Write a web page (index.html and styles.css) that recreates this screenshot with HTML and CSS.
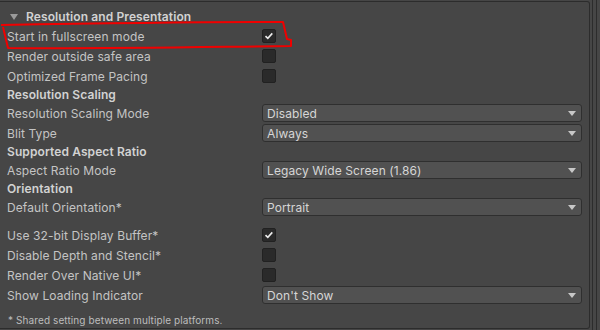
FILE: index.html
```html
<!DOCTYPE html>
<html lang="en">
<head>
    <meta charset="UTF-8">
    <title>Player Settings - Resolution and Presentation</title>
    <link rel="stylesheet" href="styles.css">
</head>
<body>

    <div class="frame">
        <!-- Panel principal -->
        <div class="panel">
            <div class="foldout">
                <span class="fold-arrow"></span>
                <span>Resolution and Presentation</span>
            </div>

            <div class="row">
                <span class="label">Start in fullscreen mode</span>
                <span class="checkbox checked">
                    <svg viewBox="0 0 14 14" width="14" height="14"><path d="M3.5 7.2 L5.8 9.4 L10.3 4.4" /></svg>
                </span>
            </div>
            <div class="row">
                <span class="label">Render outside safe area</span>
                <span class="checkbox"></span>
            </div>
            <div class="row">
                <span class="label">Optimized Frame Pacing</span>
                <span class="checkbox"></span>
            </div>

            <div class="section">Resolution Scaling</div>
            <div class="row">
                <span class="label">Resolution Scaling Mode</span>
                <div class="dropdown"><span>Disabled</span><span class="caret"></span></div>
            </div>
            <div class="row">
                <span class="label">Blit Type</span>
                <div class="dropdown"><span>Always</span><span class="caret"></span></div>
            </div>

            <div class="section">Supported Aspect Ratio</div>
            <div class="row">
                <span class="label">Aspect Ratio Mode</span>
                <div class="dropdown"><span>Legacy Wide Screen (1.86)</span><span class="caret"></span></div>
            </div>

            <div class="section">Orientation</div>
            <div class="row">
                <span class="label">Default Orientation*</span>
                <div class="dropdown"><span>Portrait</span><span class="caret"></span></div>
            </div>

            <div class="spacer"></div>

            <div class="row">
                <span class="label">Use 32-bit Display Buffer*</span>
                <span class="checkbox checked">
                    <svg viewBox="0 0 14 14" width="14" height="14"><path d="M3.5 7.2 L5.8 9.4 L10.3 4.4" /></svg>
                </span>
            </div>
            <div class="row">
                <span class="label">Disable Depth and Stencil*</span>
                <span class="checkbox"></span>
            </div>
            <div class="row">
                <span class="label">Render Over Native UI*</span>
                <span class="checkbox"></span>
            </div>
            <div class="row">
                <span class="label">Show Loading Indicator</span>
                <div class="dropdown"><span>Don't Show</span><span class="caret"></span></div>
            </div>

            <div class="note">* Shared setting between multiple platforms.</div>
        </div>

        <!-- Barra lateral -->
        <div class="gutter"><div class="rail"></div></div>
    </div>

    <!-- Marca roja a mano -->
    <svg class="scribble" width="600" height="330" viewBox="0 0 600 330">
        <path d="M1 25 C60 24 180 22 283 22 L287 39 L291 40 L291 46 C200 47 90 49 8 48 L3 27" />
    </svg>

</body>
</html>
```

FILE: styles.css
```css
body {
    margin: 0;
    background-color: #464646;
    font-family: Inter, "Noto Sans", sans-serif;
    font-size: 12px;
    letter-spacing: 0.1px;
    color: #c4c4c4;
    position: relative;
    width: 600px;
    height: 330px;
    overflow: hidden;
}
.frame {
    display: flex;
    height: 330px;
}
.panel {
    width: 590px;
    height: 328px;
    margin-top: 1px;
    box-sizing: border-box;
    border-top: 1px solid #2c2c2c;
    border-right: 1px solid #2c2c2c;
    border-bottom: 1px solid #2c2c2c;
    border-radius: 0 3px 3px 0;
    padding: 4px 7px 0 7px;
}
.foldout {
    display: flex;
    align-items: center;
    height: 20px;
    font-weight: 600;
    color: #d2d2d2;
}
.fold-arrow {
    width: 0;
    height: 0;
    border-left: 4px solid transparent;
    border-right: 4px solid transparent;
    border-top: 6px solid #9a9a9a;
    margin: 1px 8px 0 3px;
}
.section {
    display: flex;
    align-items: center;
    height: 17px;
    font-weight: 600;
    color: #d2d2d2;
}
.row {
    display: flex;
    align-items: center;
    height: 20px;
}
.label {
    width: 255px;
    white-space: nowrap;
}
.checkbox {
    width: 14px;
    height: 14px;
    box-sizing: border-box;
    background-color: #2a2a2a;
    border: 1px solid #212121;
    border-radius: 2px;
    display: flex;
    align-items: center;
    justify-content: center;
}
.checkbox svg {
    margin: -1px;
}
.checkbox path {
    fill: none;
    stroke: #ececec;
    stroke-width: 1.6;
}
.dropdown {
    width: 320px;
    height: 18px;
    box-sizing: border-box;
    background-color: #515151;
    border: 1px solid #2f2f2f;
    border-radius: 3px;
    display: flex;
    align-items: center;
    justify-content: space-between;
    padding: 0 5px 0 4px;
    color: #d6d6d6;
}
.caret {
    width: 0;
    height: 0;
    border-left: 4px solid transparent;
    border-right: 4px solid transparent;
    border-top: 5px solid #c8c8c8;
    margin-top: 1px;
}
.spacer {
    height: 8px;
}
.note {
    margin-top: 9px;
    font-size: 10px;
    color: #bdbdbd;
    padding-left: 1px;
}

/* Barra lateral derecha */
.gutter {
    width: 10px;
    display: flex;
}
.rail {
    margin-left: 2px;
    width: 3px;
    border-left: 1px solid #2c2c2c;
    border-right: 1px solid #2c2c2c;
}

/* Marca roja */
.scribble {
    position: absolute;
    top: 0;
    left: 0;
    pointer-events: none;
}
.scribble path {
    fill: none;
    stroke: #f00000;
    stroke-width: 2;
    stroke-linejoin: round;
}
```
